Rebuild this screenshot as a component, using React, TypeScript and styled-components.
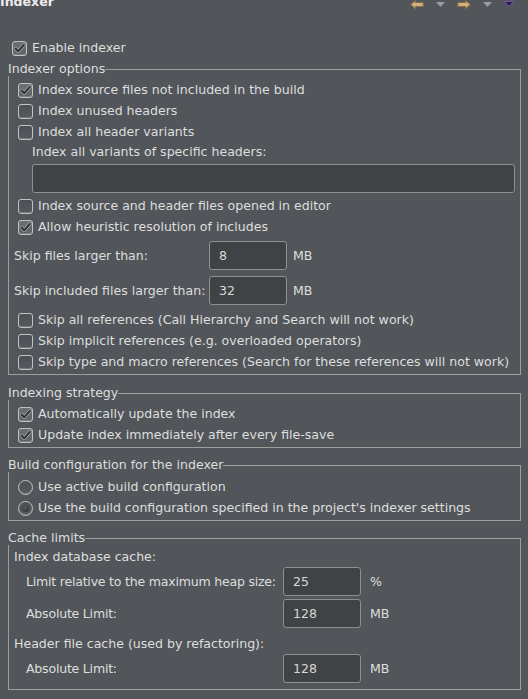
import React from "react";
import styled, { createGlobalStyle } from "styled-components";

const BG = "#52565a";
const LINE = "#9c9e9c";

const Global = createGlobalStyle`
  html, body { margin: 0; padding: 0; background: ${BG}; }
  body {
    font-family: "DejaVu Sans", "Noto Sans", sans-serif;
    font-size: 12.55px;
    color: #dedede;
  }
`;

const Page = styled.div`
  width: 528px;
  height: 699px;
  overflow: hidden;
  background: ${BG};
  display: flex;
  flex-direction: column;
`;

const TitleBar = styled.div`
  display: flex;
  justify-content: space-between;
  height: 12px;
  padding-right: 14px;
`;

const Title = styled.div`
  font-weight: bold;
  line-height: 12px;
  margin-top: -4px;
  color: #ececec;
`;

const Tools = styled.div`
  display: flex;
  align-items: flex-start;
  gap: 12px;
`;

const Content = styled.div`
  padding: 26px 7px 0 8px;
  display: flex;
  flex-direction: column;
`;

const CheckRow = styled.div<{ $indent?: number; $mt?: number }>`
  display: flex;
  align-items: center;
  gap: 5px;
  height: 21px;
  margin-left: ${(p) => p.$indent ?? 0}px;
  margin-top: ${(p) => p.$mt ?? 0}px;
  white-space: nowrap;
`;

const CheckText = styled.span`
  margin-bottom: 3px;
`;

const Box = styled.span<{ $checked?: boolean }>`
  width: 15px;
  height: 15px;
  box-sizing: border-box;
  border: 1px solid #c2c2c2;
  border-radius: 3px;
  background: ${(p) =>
    p.$checked
      ? "linear-gradient(#6c7073, #5e6265)"
      : "linear-gradient(#4c5054, #565a5e)"};
  box-shadow: inset 0 -1px 0 rgba(255, 255, 255, 0.18);
  display: flex;
  align-items: center;
  justify-content: center;
  flex: none;
`;

const Round = styled(Box)`
  border-radius: 50%;
`;

const Dot = styled.span`
  width: 7px;
  height: 7px;
  border-radius: 50%;
  background: radial-gradient(circle at 40% 35%, #5a5e62, #26292c);
`;

const Group = styled.section<{ $mt: number }>`
  margin-top: ${(p) => p.$mt}px;
  display: flex;
  flex-direction: column;
`;

const GroupHead = styled.div`
  display: flex;
  height: 14px;
`;

const GroupLabel = styled.span`
  line-height: 14px;
  white-space: nowrap;
`;

const GroupLine = styled.div`
  flex: 1;
  margin-top: 7px;
  border-top: 1px solid ${LINE};
  border-right: 1px solid ${LINE};
`;

const GroupBody = styled.div<{ $pt: number; $pb: number }>`
  border: 1px solid ${LINE};
  border-top: none;
  padding: ${(p) => p.$pt}px 5px ${(p) => p.$pb}px 5px;
  display: flex;
  flex-direction: column;
`;

const TextLine = styled.div<{ $indent?: number; $mt?: number }>`
  height: 18px;
  line-height: 18px;
  margin-left: ${(p) => p.$indent ?? 0}px;
  margin-top: ${(p) => p.$mt ?? 0}px;
  white-space: nowrap;
`;

const Input = styled.input`
  box-sizing: border-box;
  height: 29px;
  border: 1px solid #8e908e;
  border-radius: 3px;
  background: #3f4346;
  color: #d8d8d8;
  font: inherit;
  padding: 0 0 0 9px;
  margin: 0;
  outline: none;
  min-width: 0;
`;

const WideInput = styled(Input)`
  margin-left: 18px;
  margin-top: 3px;
`;

const NumRow = styled.div<{ $label: number; $indent?: number; $mt: number; $unitGap: number }>`
  display: grid;
  grid-template-columns: ${(p) => p.$label}px 78px auto;
  align-items: center;
  height: 29px;
  margin-top: ${(p) => p.$mt}px;
  margin-left: ${(p) => p.$indent ?? 0}px;
  white-space: nowrap;

  & > input {
    width: 78px;
  }
`;

const FieldLabel = styled.span<{ $tight?: boolean }>`
  letter-spacing: ${(p) => (p.$tight ? "-0.22px" : "normal")};
`;

const Unit = styled.span<{ $gap: number }>`
  margin-left: ${(p) => p.$gap}px;
`;

const Check = ({ checked, children, indent, mt }: { checked?: boolean; children: React.ReactNode; indent?: number; mt?: number }) => (
  <CheckRow $indent={indent} $mt={mt}>
    <Box $checked={checked}>
      {checked && (
        <svg width="13" height="13" viewBox="0 0 13 13">
          <path d="M2.5 6.5 L5.2 9.3 L10.8 2.8" fill="none" stroke="#a9abad" strokeWidth="3.4" strokeLinecap="round" strokeLinejoin="round" />
          <path d="M2.5 6.5 L5.2 9.3 L10.8 2.8" fill="none" stroke="#2e3235" strokeWidth="2" strokeLinecap="round" strokeLinejoin="round" />
        </svg>
      )}
    </Box>
    <CheckText>{children}</CheckText>
  </CheckRow>
);

const Radio = ({ checked, children }: { checked?: boolean; children: React.ReactNode }) => (
  <CheckRow $indent={4}>
    <Round>{checked && <Dot />}</Round>
    <CheckText>{children}</CheckText>
  </CheckRow>
);

const GroupBox = ({ label, mt, pt, pb, children }: { label: string; mt: number; pt: number; pb: number; children: React.ReactNode }) => (
  <Group $mt={mt}>
    <GroupHead>
      <GroupLabel>{label}</GroupLabel>
      <GroupLine />
    </GroupHead>
    <GroupBody $pt={pt} $pb={pb}>{children}</GroupBody>
  </Group>
);

const ArrowLeft = () => (
  <svg width="14" height="10" viewBox="0 0 14 10">
    <path d="M0.8 4.5 L5.5 0.5 L5.5 2.5 L13.2 2.5 L13.2 6.5 L5.5 6.5 L5.5 8.8 Z" fill="#cfb07c" stroke="#8a6c44" strokeWidth="1" strokeLinejoin="round" />
  </svg>
);

const ArrowRight = () => (
  <svg width="14" height="10" viewBox="0 0 14 10">
    <path d="M13.2 4.5 L8.5 0.5 L8.5 2.5 L0.8 2.5 L0.8 6.5 L8.5 6.5 L8.5 8.8 Z" fill="#cfb07c" stroke="#8a6c44" strokeWidth="1" strokeLinejoin="round" />
  </svg>
);

const Drop = () => (
  <svg width="9" height="8" viewBox="0 0 9 8" style={{ marginTop: 2 }}>
    <path d="M0 0 L9 0 L4.5 5 Z" fill="#9a9ea2" />
  </svg>
);

const Menu = () => (
  <svg width="10" height="8" viewBox="0 0 10 8" style={{ marginTop: 1 }}>
    <path d="M0.5 0.5 L9.5 0.5 L5 5.5 Z" fill="#2e1848" stroke="#7a4db4" strokeWidth="1" strokeLinejoin="round" />
  </svg>
);

const Num = ({ label, value, unit, big, mt }: { label: string; value: string; unit: string; big?: boolean; mt: number }) =>
  big ? (
    <NumRow $label={257} $indent={12} $mt={mt} $unitGap={9}>
      <FieldLabel $tight>{label}</FieldLabel>
      <Input readOnly defaultValue={value} />
      <Unit $gap={9}>{unit}</Unit>
    </NumRow>
  ) : (
    <NumRow $label={195} $mt={mt} $unitGap={6}>
      <FieldLabel>{label}</FieldLabel>
      <Input readOnly defaultValue={value} />
      <Unit $gap={6}>{unit}</Unit>
    </NumRow>
  );

export default function App() {
  return (
    <Page>
      <Global />
      <TitleBar>
        <Title>Indexer</Title>
        <Tools>
          <ArrowLeft />
          <Drop />
          <ArrowRight />
          <Drop />
          <Menu />
        </Tools>
      </TitleBar>
      <Content>
        <Check checked indent={4}>Enable indexer</Check>

        <GroupBox label="Indexer options" mt={3} pt={4} pb={1}>
          <Check checked indent={4}>Index source files not included in the build</Check>
          <Check indent={4}>Index unused headers</Check>
          <Check indent={4}>Index all header variants</Check>
          <TextLine $indent={18}>Index all variants of specific headers:</TextLine>
          <WideInput readOnly defaultValue="" />
          <Check indent={4} mt={3}>Index source and header files opened in editor</Check>
          <Check checked indent={4}>Allow heuristic resolution of includes</Check>
          <Num label="Skip files larger than:" value="8" unit="MB" mt={3} />
          <Num label="Skip included files larger than:" value="32" unit="MB" mt={6} />
          <Check indent={4} mt={5}>Skip all references (Call Hierarchy and Search will not work)</Check>
          <Check indent={4}>Skip implicit references (e.g. overloaded operators)</Check>
          <Check indent={4}>Skip type and macro references (Search for these references will not work)</Check>
        </GroupBox>

        <GroupBox label="Indexing strategy" mt={11} pt={4} pb={1}>
          <Check checked indent={4}>Automatically update the index</Check>
          <Check checked indent={4}>Update index immediately after every file-save</Check>
        </GroupBox>

        <GroupBox label="Build configuration for the indexer" mt={10} pt={5} pb={1}>
          <Radio>Use active build configuration</Radio>
          <Radio checked>Use the build configuration specified in the project's indexer settings</Radio>
        </GroupBox>

        <GroupBox label="Cache limits" mt={10} pt={3} pb={6}>
          <TextLine>Index database cache:</TextLine>
          <Num big label="Limit relative to the maximum heap size:" value="25" unit="%" mt={1} />
          <Num big label="Absolute Limit:" value="128" unit="MB" mt={3} />
          <TextLine $mt={7}>Header file cache (used by refactoring):</TextLine>
          <Num big label="Absolute Limit:" value="128" unit="MB" mt={1} />
        </GroupBox>
      </Content>
    </Page>
  );
}
